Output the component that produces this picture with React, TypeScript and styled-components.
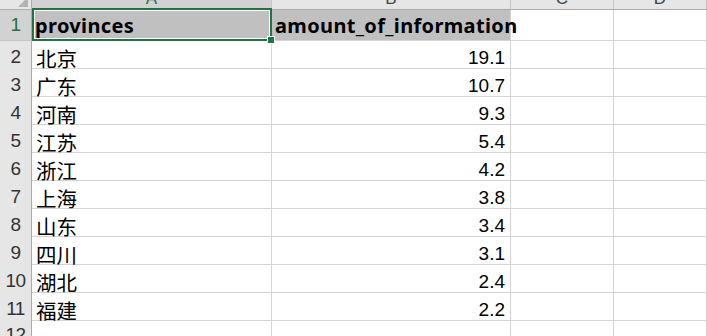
import React from 'react';
import styled, { createGlobalStyle } from 'styled-components';

const GlobalStyle = createGlobalStyle`
  html, body {
    margin: 0;
    padding: 0;
    background: #fff;
    overflow: hidden;
  }
`;

const COLS = '32px 240px 239px 103px 1fr';

const Sheet = styled.div`
  width: 707px;
  height: 336px;
  overflow: hidden;
  background: #fff;
  font-family: 'Noto Sans', 'Noto Sans CJK SC', sans-serif;
  position: relative;
`;

const HeaderRow = styled.div`
  display: grid;
  grid-template-columns: ${COLS};
  height: 9px;
  background: #e6e6e6;
  border-bottom: 1px solid #ababab;
`;

const Corner = styled.div`
  position: relative;
  border-right: 1px solid #ababab;
  overflow: hidden;

  &::after {
    content: '';
    position: absolute;
    right: 3px;
    bottom: 2px;
    border-left: 10px solid transparent;
    border-bottom: 10px solid #b4b4b4;
  }
`;

const ColHead = styled.div<{ $active?: boolean }>`
  border-right: 1px solid #c6c6c6;
  overflow: hidden;
  text-align: center;
  background: ${(p) => (p.$active ? '#d2d2d2' : '#e6e6e6')};
  color: ${(p) => (p.$active ? '#217346' : '#444')};
  font-family: 'Liberation Sans', sans-serif;
  font-size: 17px;

  span {
    display: block;
    line-height: 20px;
    margin-top: -11px;
  }
`;

const Row = styled.div<{ $h: number }>`
  display: grid;
  grid-template-columns: ${COLS};
  height: ${(p) => p.$h}px;
  border-bottom: 1px solid #d4d4d4;
  box-sizing: border-box;
`;

const RowHead = styled.div<{ $active?: boolean }>`
  background: ${(p) => (p.$active ? '#d2d2d2' : '#e6e6e6')};
  color: ${(p) => (p.$active ? '#217346' : '#333')};
  border-right: 1px solid #ababab;
  margin-bottom: -1px;
  border-bottom: 1px solid #c6c6c6;
  display: flex;
  align-items: center;
  justify-content: center;
  font-family: 'Liberation Sans', sans-serif;
  font-size: 19px;
  letter-spacing: -0.5px;
`;

const Cell = styled.div<{ $right?: boolean; $head?: boolean }>`
  border-right: 1px solid #d4d4d4;
  display: flex;
  align-items: center;
  justify-content: ${(p) => (p.$right ? 'flex-end' : 'flex-start')};
  padding: ${(p) => (p.$right ? '2px 5px 0 0' : p.$head ? '1px 0 0 3px' : '2px 0 0 4px')};
  background: ${(p) => (p.$head ? '#c0c0c0' : 'transparent')};
  font-size: ${(p) => (p.$head ? '20px' : p.$right ? '19px' : '20.5px')};
  font-weight: ${(p) => (p.$head ? 700 : 400)};
  letter-spacing: ${(p) => (p.$head ? '0.35px' : '0')};
  font-family: ${(p) =>
    p.$right && !p.$head
      ? "'Liberation Sans', sans-serif"
      : "'Noto Sans', 'Noto Sans CJK SC', sans-serif"};
  color: #000;
  white-space: nowrap;
  overflow: visible;
  min-width: 0;
  position: relative;
  z-index: ${(p) => (p.$head ? 1 : 0)};
`;

const Selection = styled.div`
  position: absolute;
  left: 32px;
  top: 8px;
  width: 240px;
  height: 33px;
  box-sizing: border-box;
  border: 2px solid #217346;
  box-shadow: inset 0 0 0 1px #fff;
  z-index: 3;
  pointer-events: none;

  &::after {
    content: '';
    position: absolute;
    right: -5px;
    bottom: -5px;
    width: 6px;
    height: 6px;
    background: #217346;
    border: 1px solid #fff;
  }
`;

const data: [string, string][] = [
  ['北京', '19.1'],
  ['广东', '10.7'],
  ['河南', '9.3'],
  ['江苏', '5.4'],
  ['浙江', '4.2'],
  ['上海', '3.8'],
  ['山东', '3.4'],
  ['四川', '3.1'],
  ['湖北', '2.4'],
  ['福建', '2.2'],
];

const App = () => (
  <Sheet>
    <GlobalStyle />
    <HeaderRow>
      <Corner />
      <ColHead $active><span>A</span></ColHead>
      <ColHead><span>B</span></ColHead>
      <ColHead><span>C</span></ColHead>
      <ColHead><span>D</span></ColHead>
    </HeaderRow>
    <Row $h={31}>
      <RowHead $active>1</RowHead>
      <Cell $head>provinces</Cell>
      <Cell $head>amount_of_information</Cell>
      <Cell />
      <Cell />
    </Row>
    {data.map(([prov, val], i) => (
      <Row key={prov} $h={28}>
        <RowHead>{i + 2}</RowHead>
        <Cell>{prov}</Cell>
        <Cell $right>{val}</Cell>
        <Cell />
        <Cell />
      </Row>
    ))}
    <Row $h={28}>
      <RowHead>12</RowHead>
      <Cell />
      <Cell />
      <Cell />
      <Cell />
    </Row>
    <Selection />
  </Sheet>
);

export default App;
